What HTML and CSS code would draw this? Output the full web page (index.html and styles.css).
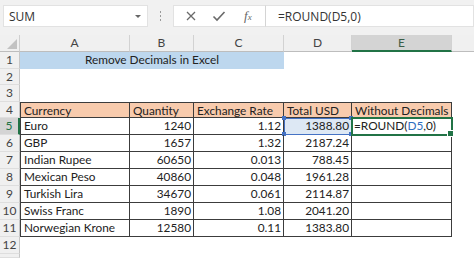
FILE: index.html
```html
<!DOCTYPE html>
<html lang="en">
<head>
  <title>Remove Decimals in Excel</title>
  <link rel="stylesheet" href="styles.css">
</head>
<body>
  <div class="toolbar">
    <div class="namebox">
      <span>SUM</span>
      <span class="caret"></span>
    </div>
    <div class="grip"><i></i><i></i><i></i></div>
    <div class="fbuttons">
      <svg class="icon" width="12" height="12" viewBox="0 0 12 12">
        <path d="M2 2 L10 10 M10 2 L2 10" stroke="#6a6a6a" stroke-width="1.3" fill="none"/>
      </svg>
      <svg class="icon" width="14" height="12" viewBox="0 0 14 12">
        <path d="M1.5 6.5 L5 10 L12.5 2" stroke="#6a6a6a" stroke-width="1.6" fill="none"/>
      </svg>
      <span class="fx">f<small>x</small></span>
    </div>
    <div class="formula">=ROUND(D5,0)</div>
  </div>

  <div class="sheet">
    <div class="corner"><span class="tri"></span></div>
    <div class="ch">A</div>
    <div class="ch">B</div>
    <div class="ch">C</div>
    <div class="ch">D</div>
    <div class="ch active">E</div>
    <div class="ch last"></div>

    <div class="rh">1</div>
    <div class="title">Remove Decimals in Excel</div>
    <div></div><div></div><div></div>

    <div class="rh">2</div>
    <div></div><div></div><div></div><div></div><div></div><div></div>

    <div class="rh">3</div>
    <div></div><div></div><div></div><div></div><div></div><div></div>

    <div class="rh">4</div>
    <div class="t hd first">Currency</div>
    <div class="t hd">Quantity</div>
    <div class="t hd">Exchange Rate</div>
    <div class="t hd">Total USD</div>
    <div class="t hd">Without Decimals</div>
    <div></div>

    <div class="rh active">5</div>
    <div class="t first">Euro</div>
    <div class="t num">1240</div>
    <div class="t num">1.12</div>
    <div class="t num ref">1388.80
      <span class="dot tl"></span><span class="dot tr"></span><span class="dot bl"></span><span class="dot br"></span>
    </div>
    <div class="t edit">=ROUND(<span class="blue">D5</span>,0)<span class="handle"></span></div>
    <div></div>

    <div class="rh">6</div>
    <div class="t first">GBP</div>
    <div class="t num">1657</div>
    <div class="t num">1.32</div>
    <div class="t num">2187.24</div>
    <div class="t"></div>
    <div></div>

    <div class="rh">7</div>
    <div class="t first">Indian Rupee</div>
    <div class="t num">60650</div>
    <div class="t num">0.013</div>
    <div class="t num">788.45</div>
    <div class="t"></div>
    <div></div>

    <div class="rh">8</div>
    <div class="t first">Mexican Peso</div>
    <div class="t num">40860</div>
    <div class="t num">0.048</div>
    <div class="t num">1961.28</div>
    <div class="t"></div>
    <div></div>

    <div class="rh">9</div>
    <div class="t first">Turkish Lira</div>
    <div class="t num">34670</div>
    <div class="t num">0.061</div>
    <div class="t num">2114.87</div>
    <div class="t"></div>
    <div></div>

    <div class="rh">10</div>
    <div class="t first">Swiss Franc</div>
    <div class="t num">1890</div>
    <div class="t num">1.08</div>
    <div class="t num">2041.20</div>
    <div class="t"></div>
    <div></div>

    <div class="rh">11</div>
    <div class="t first">Norwegian Krone</div>
    <div class="t num">12580</div>
    <div class="t num">0.11</div>
    <div class="t num">1383.80</div>
    <div class="t"></div>
    <div></div>

    <div class="rh">12</div>
    <div></div><div></div><div></div><div></div><div></div><div></div>

    <div class="rh"></div>
    <div></div><div></div><div></div><div></div><div></div><div></div>
  </div>
</body>
</html>
```

FILE: styles.css
```css
body {
  margin: 0;
  width: 474px;
  height: 258px;
  overflow: hidden;
  background: #fff;
  font-family: Lato, "Open Sans", sans-serif;
  color: #222;
}

.toolbar {
  display: flex;
  align-items: center;
  height: 35px;
  padding: 0 0 3px 3px;
  box-sizing: border-box;
  background: #f1f1f1;
}

.namebox {
  display: flex;
  align-items: center;
  justify-content: space-between;
  width: 145px;
  height: 22px;
  padding: 0 6px 0 5px;
  box-sizing: border-box;
  background: #fff;
  border: 1px solid #e2e2e2;
  font-family: "Open Sans", sans-serif;
  font-size: 12px;
  color: #333;
}

.caret {
  width: 0;
  height: 0;
  border-left: 3px solid transparent;
  border-right: 3px solid transparent;
  border-top: 3px solid #666;
}

.grip {
  display: flex;
  flex-direction: column;
  align-items: center;
  gap: 2px;
  width: 25px;
}

.grip i {
  width: 1px;
  height: 2px;
  background: #9a9a9a;
}

.fbuttons {
  display: flex;
  align-items: center;
  width: 93px;
  height: 22px;
  padding-left: 11px;
  gap: 15px;
  box-sizing: border-box;
  background: #fff;
  border: 1px solid #e2e2e2;
  border-right: 1px solid #d4d4d4;
}

.fx {
  font-family: "Liberation Serif", serif;
  font-style: italic;
  font-size: 13px;
  color: #666;
  margin-left: 3px;
}

.fx small {
  font-size: 9px;
}

.formula {
  flex: 1;
  height: 22px;
  line-height: 21px;
  padding-left: 12px;
  box-sizing: border-box;
  background: #fff;
  border: 1px solid #e2e2e2;
  border-left: none;
  font-family: "Open Sans", sans-serif;
  font-size: 12px;
  color: #333;
}

.sheet {
  display: grid;
  grid-template-columns: 20px 110px 64px 90px 68px 100px 22px;
  grid-template-rows: 17px 17px 16px 17px 16px repeat(8, 17px) 4px;
  font-size: 11.8px;
}

.sheet > div {
  box-sizing: border-box;
  white-space: nowrap;
  line-height: 16px;
}

.corner {
  position: relative;
  background: #f0f0f0;
  border-right: 1px solid #cfcfcf;
  border-bottom: 1px solid #bdbdbd;
}

.tri {
  position: absolute;
  right: 2px;
  bottom: 2px;
  width: 0;
  height: 0;
  border-left: 10px solid transparent;
  border-bottom: 10px solid #c2c2c2;
}

.ch {
  background: #f0f0f0;
  border-right: 1px solid #d2d2d2;
  border-bottom: 1px solid #bdbdbd;
  text-align: center;
  color: #444;
  font-size: 12px;
}

.ch.last {
  border-right: none;
}

.ch.active {
  background: #d4d4d4;
  border-bottom: 2px solid #217346;
  color: #3b5e48;
}

.rh {
  background: #f0f0f0;
  border-right: 1px solid #c6c6c6;
  border-bottom: 1px solid #dedede;
  text-align: center;
  color: #444;
  font-size: 12px;
}

.rh.active {
  background: #d4d4d4;
  border-right: 2px solid #217346;
  color: #217346;
}

.title {
  grid-column: 2 / 5;
  background: #bdd7ee;
  text-align: center;
}

.t {
  position: relative;
  padding: 0 3px;
  border-right: 1px solid #3c3c3c;
  border-bottom: 1px solid #3c3c3c;
}

.t.first {
  border-left: 1px solid #3c3c3c;
}

.hd {
  background: #f8cbad;
  border-top: 1px solid #3c3c3c;
}

.num {
  text-align: right;
  padding-right: 2px;
}

.ref {
  background: #dde8f4;
  outline: 1px solid #4472c4;
  outline-offset: -1px;
}

.dot {
  position: absolute;
  width: 4px;
  height: 4px;
  background: #4472c4;
}

.dot.tl { left: -2px; top: -2px; }
.dot.tr { right: -2px; top: -2px; }
.dot.bl { left: -2px; bottom: -2px; }
.dot.br { right: -2px; bottom: -2px; }

.edit {
  outline: 2px solid #217346;
  outline-offset: -1px;
  z-index: 1;
  padding-left: 2px;
}

.blue {
  color: #2f6fc0;
}

.handle {
  position: absolute;
  right: -3px;
  bottom: -3px;
  width: 5px;
  height: 5px;
  background: #217346;
  border: 1px solid #fff;
}
```
